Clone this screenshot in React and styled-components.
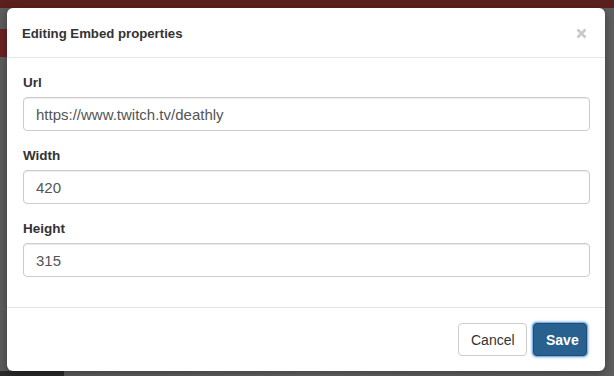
import React from "react";
import styled, { createGlobalStyle } from "styled-components";

const Global = createGlobalStyle`
  html, body { margin: 0; padding: 0; }
  body {
    width: 614px;
    height: 376px;
    overflow: hidden;
    background: #626262;
    font-family: "Liberation Sans", Arial, Helvetica, sans-serif;
  }
  * { box-sizing: border-box; }
`;

const Backdrop = styled.div`
  width: 614px;
  height: 376px;
  padding: 8px 9px 5px 7px;
  background:
    linear-gradient(#5b1f1f, #5b1f1f) 0 0 / 100% 8px no-repeat,
    linear-gradient(#6b2222, #6b2222) 0 29px / 7px 28px no-repeat,
    linear-gradient(#2b2b2b, #2b2b2b) 0 371px / 64px 5px no-repeat,
    linear-gradient(90deg, #5c5c5c, #666 50%, #5e5e5e);
`;

const Modal = styled.div`
  width: 598px;
  height: 363px;
  background: #fff;
  border-radius: 6px;
  box-shadow: 0 3px 9px rgba(0, 0, 0, 0.35);
  display: flex;
  flex-direction: column;
  overflow: hidden;
`;

const Header = styled.div`
  height: 50px;
  padding: 0 17px 0 15px;
  border-bottom: 1px solid #e5e5e5;
  display: flex;
  align-items: center;
  justify-content: space-between;
`;

const Title = styled.h4`
  margin: 0;
  margin-top: 1px;
  font-size: 13.2px;
  font-weight: 700;
  color: #333;
`;

const Close = styled.button`
  border: 0;
  background: none;
  padding: 0;
  margin-top: 1px;
  width: 14px;
  height: 14px;
  display: flex;
  align-items: center;
  justify-content: center;
  cursor: pointer;
`;

const Body = styled.div`
  flex: 1;
  padding: 17px 15px 0 16px;
  display: flex;
  flex-direction: column;
  gap: 17px;
`;

const Group = styled.div`
  display: flex;
  flex-direction: column;
  gap: 6px;
`;

const Label = styled.label`
  font-size: 13.5px;
  line-height: 16px;
  font-weight: 700;
  color: #333;
`;

const Input = styled.input`
  height: 34px;
  width: 100%;
  padding: 0 12px;
  border: 1px solid #ccc;
  border-radius: 4px;
  box-shadow: inset 0 1px 1px rgba(0, 0, 0, 0.075);
  font-family: inherit;
  font-size: 15px;
  color: #555;
  outline: none;
`;

const Footer = styled.div`
  height: 64px;
  border-top: 1px solid #e5e5e5;
  padding: 0 18px 0 0;
  display: flex;
  align-items: center;
  justify-content: flex-end;
  gap: 6px;
`;

const Button = styled.button`
  height: 33px;
  padding: 0 12px;
  border-radius: 4px;
  font-family: inherit;
  font-size: 14px;
  cursor: pointer;
  border: 1px solid ${(p) => (p.$primary ? "#204d74" : "#ccc")};
  background: ${(p) => (p.$primary ? "#286090" : "#fff")};
  color: ${(p) => (p.$primary ? "#fff" : "#333")};
  font-weight: ${(p) => (p.$primary ? 700 : 400)};
  box-shadow: ${(p) =>
    p.$primary ? "0 0 0 1px #7fb0e6, 0 0 2px 2px rgba(90,150,220,0.45)" : "none"};
  width: ${(p) => p.$w}px;
`;

export default function App() {
  return (
    <>
      <Global />
      <Backdrop>
        <Modal>
          <Header>
            <Title>Editing Embed properties</Title>
            <Close aria-label="Close">
              <svg width="11" height="11" viewBox="0 0 11 11">
                <path
                  d="M1.5 1.5 L9.5 9.5 M9.5 1.5 L1.5 9.5"
                  stroke="#c9c9c9"
                  strokeWidth="2.6"
                  strokeLinecap="butt"
                />
              </svg>
            </Close>
          </Header>
          <Body>
            <Group>
              <Label>Url</Label>
              <Input defaultValue="https://www.twitch.tv/deathly" />
            </Group>
            <Group>
              <Label>Width</Label>
              <Input defaultValue="420" />
            </Group>
            <Group>
              <Label>Height</Label>
              <Input defaultValue="315" />
            </Group>
          </Body>
          <Footer>
            <Button $w={69}>Cancel</Button>
            <Button $primary $w={54}>Save</Button>
          </Footer>
        </Modal>
      </Backdrop>
    </>
  );
}
